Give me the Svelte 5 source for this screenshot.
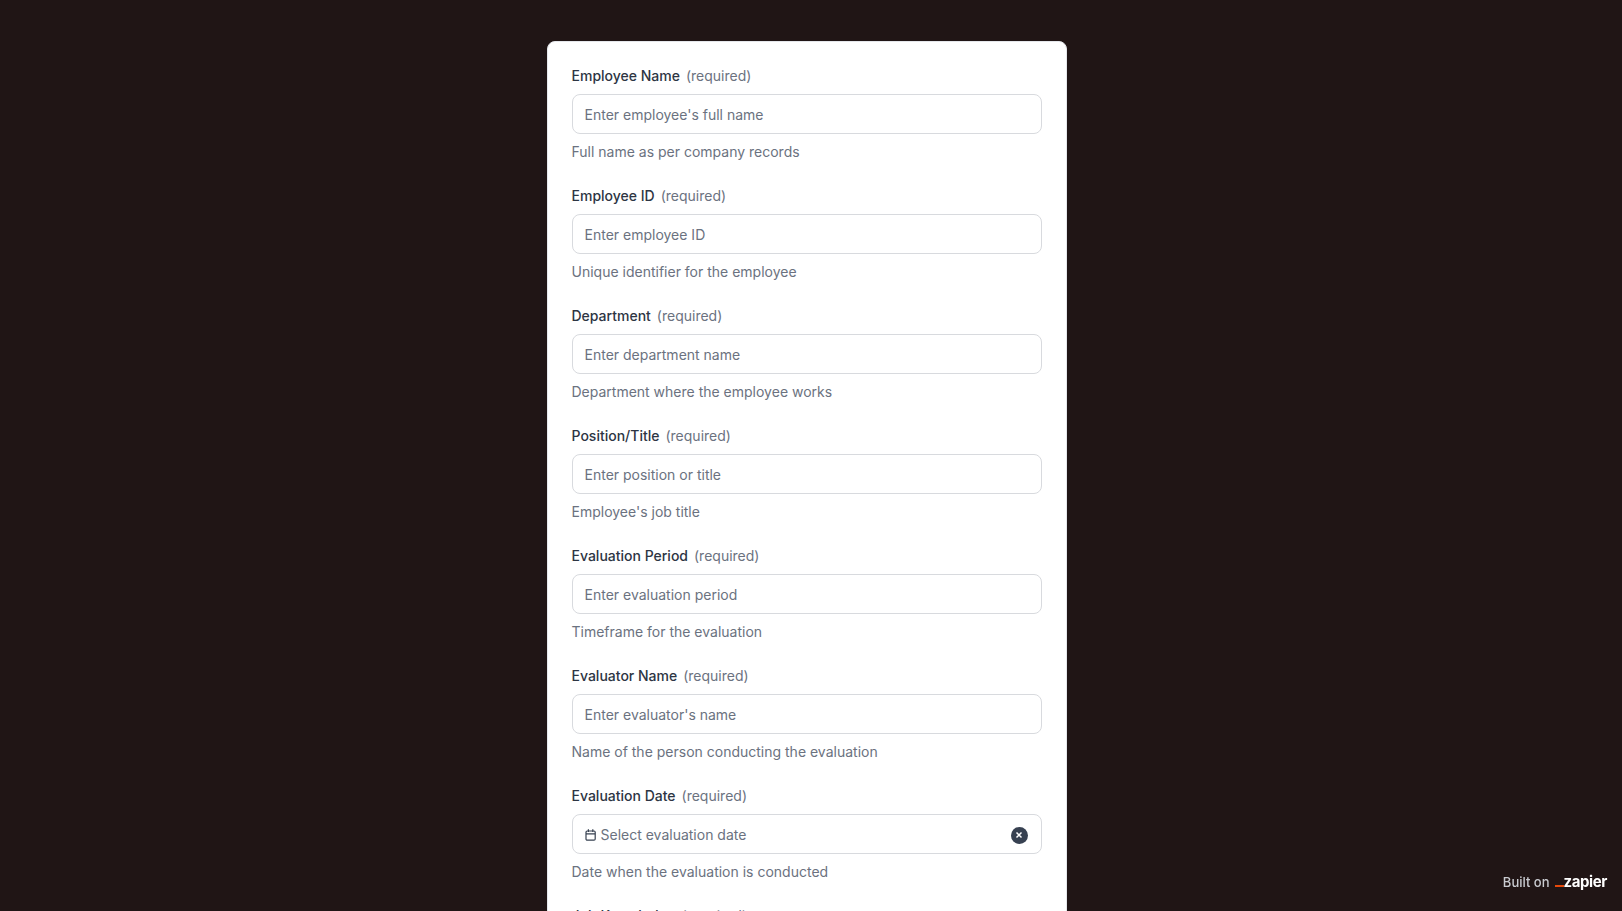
<script>
  const fields = [
    { label: 'Employee Name', placeholder: "Enter employee's full name", help: 'Full name as per company records' },
    { label: 'Employee ID', placeholder: 'Enter employee ID', help: 'Unique identifier for the employee' },
    { label: 'Department', placeholder: 'Enter department name', help: 'Department where the employee works' },
    { label: 'Position/Title', placeholder: 'Enter position or title', help: "Employee's job title" },
    { label: 'Evaluation Period', placeholder: 'Enter evaluation period', help: 'Timeframe for the evaluation' },
    { label: 'Evaluator Name', placeholder: "Enter evaluator's name", help: 'Name of the person conducting the evaluation' }
  ];
</script>

<main class="page">
  <form class="card">
    {#each fields as field}
      <div class="field">
        <div class="label"><span class="name">{field.label}</span><span class="req">(required)</span></div>
        <input class="input" type="text" placeholder={field.placeholder} />
        <p class="help">{field.help}</p>
      </div>
    {/each}

    <div class="field">
      <div class="label"><span class="name">Evaluation Date</span><span class="req">(required)</span></div>
      <div class="input date">
        <svg class="cal" viewBox="0 0 11 12" fill="none" stroke="#374151" stroke-width="1.2">
          <rect x="1" y="2" width="9.2" height="9.2" rx="1.2" />
          <path d="M1 4.8h9.2M3.4 0.2v2.8M7.8 0.2v2.8" />
        </svg>
        <span class="date-text">Select evaluation date</span>
        <span class="clear">
          <svg viewBox="0 0 8 8" fill="none" stroke="#fff" stroke-width="1.5"><path d="M1.5 1.5l5 5M6.5 1.5l-5 5" /></svg>
        </span>
      </div>
      <p class="help">Date when the evaluation is conducted</p>
    </div>

    <div class="field">
      <div class="label"><span class="name">Job Knowledge</span><span class="req">(required)</span></div>
    </div>
  </form>
</main>

<div class="built">
  <span>Built on</span>
  <span class="logo"><i class="dash"></i><b>zapier</b></span>
</div>

<style>
  :global(body) {
    margin: 0;
    background: #201515;
    overflow: hidden;
  }

  .page {
    height: 911px;
    overflow: hidden;
    display: flex;
    justify-content: center;
    padding: 41px 9px 0 0;
    box-sizing: border-box;
    font-family: Inter, sans-serif;
  }

  .card {
    width: 520px;
    box-sizing: border-box;
    background: #fff;
    border: 1px solid #e5e7eb;
    border-radius: 8px 8px 0 0;
    padding: 24px;
    display: flex;
    flex-direction: column;
    gap: 24px;
    height: max-content;
  }

  .field {
    display: flex;
    flex-direction: column;
  }

  .label {
    display: flex;
    gap: 6px;
    font-size: 14px;
    line-height: 20px;
    margin-bottom: 8px;
  }

  .name {
    font-weight: 500;
    color: #2d3543;
  }

  .req {
    color: #6b7280;
  }

  .input {
    height: 40px;
    box-sizing: border-box;
    width: 100%;
    padding: 0 12px;
    border: 1px solid #d8dade;
    border-radius: 8px;
    background: #fff;
    font: 14px/20px Inter, sans-serif;
    color: #6b7280;
  }

  .input::placeholder {
    color: #6b7280;
    opacity: 1;
  }

  .date {
    display: flex;
    align-items: center;
    padding-top: 2px;
  }

  .cal {
    width: 11px;
    height: 12px;
    margin-right: 5px;
  }

  .date-text {
    flex: 1;
  }

  .clear {
    width: 17px;
    height: 17px;
    margin-right: 1px;
    border-radius: 50%;
    background: #374151;
    display: flex;
    align-items: center;
    justify-content: center;
  }

  .clear svg {
    width: 8px;
    height: 8px;
  }

  .help {
    margin: 8px 0 0;
    font-size: 14px;
    line-height: 20px;
    color: #6b7280;
  }

  .built {
    position: fixed;
    right: 15px;
    bottom: 20px;
    display: flex;
    align-items: center;
    gap: 5px;
    font: 500 13px/18px Inter, sans-serif;
    color: #c9cbd0;
  }

  .logo {
    display: flex;
    align-items: flex-end;
  }

  .logo b {
    color: #fff;
    font-weight: 700;
    font-size: 15px;
    letter-spacing: -0.4px;
  }

  .dash {
    width: 9px;
    height: 2px;
    background: #e8490a;
    margin-bottom: 4px;
  }
</style>
